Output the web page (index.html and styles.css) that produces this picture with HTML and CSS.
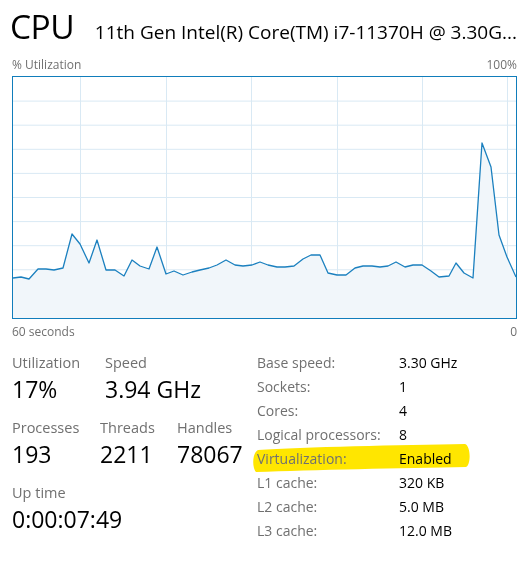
FILE: index.html
```html
<!DOCTYPE html>
<html lang="en">
<head>
<meta charset="utf-8">
<title>CPU</title>
<link rel="stylesheet" href="styles.css">
</head>
<body>
<div class="page">
  <header class="head">
    <h1 class="title">CPU</h1>
    <span class="model">11th Gen Intel(R) Core(TM) i7-11370H @ 3.30G...</span>
  </header>

  <div class="axis axis-top"><span>% Utilization</span><span>100%</span></div>

  <div class="chart">
    <svg class="graph" width="503" height="241" viewBox="0 0 503 241">
      <g class="grid">
        <line x1="0" y1="24.1" x2="503" y2="24.1"/>
        <line x1="0" y1="48.2" x2="503" y2="48.2"/>
        <line x1="0" y1="72.3" x2="503" y2="72.3"/>
        <line x1="0" y1="96.4" x2="503" y2="96.4"/>
        <line x1="0" y1="120.5" x2="503" y2="120.5"/>
        <line x1="0" y1="144.6" x2="503" y2="144.6"/>
        <line x1="0" y1="168.7" x2="503" y2="168.7"/>
        <line x1="0" y1="192.8" x2="503" y2="192.8"/>
        <line x1="0" y1="216.9" x2="503" y2="216.9"/>
        <line x1="67.5" y1="0" x2="67.5" y2="241"/>
        <line x1="153.5" y1="0" x2="153.5" y2="241"/>
        <line x1="238.5" y1="0" x2="238.5" y2="241"/>
        <line x1="324.5" y1="0" x2="324.5" y2="241"/>
        <line x1="409.5" y1="0" x2="409.5" y2="241"/>
        <line x1="494.5" y1="0" x2="494.5" y2="241"/>
      </g>
      <polygon class="area" points="0,201 8,200 16,202 25,192 33,192 41,193 50,191 59,157 67,167 76,186 84,163 93,193 102,193 111,199 119,183 127,189 136,192 144,170 153,197 161,194 170,198 179,195 187,193 196,191 204,188 213,183 222,188 230,189 239,188 247,185 255,188 264,190 272,190 281,189 290,182 298,178 307,178 315,196 324,198 333,198 342,191 350,189 359,189 367,190 375,189 383,185 392,190 400,188 409,188 418,194 426,200 436,199 443,186 451,196 460,201 469,66 478,90 486,158 494,180 503,200 503,241 0,241"/>
      <polyline class="line" points="0,201 8,200 16,202 25,192 33,192 41,193 50,191 59,157 67,167 76,186 84,163 93,193 102,193 111,199 119,183 127,189 136,192 144,170 153,197 161,194 170,198 179,195 187,193 196,191 204,188 213,183 222,188 230,189 239,188 247,185 255,188 264,190 272,190 281,189 290,182 298,178 307,178 315,196 324,198 333,198 342,191 350,189 359,189 367,190 375,189 383,185 392,190 400,188 409,188 418,194 426,200 436,199 443,186 451,196 460,201 469,66 478,90 486,158 494,180 503,200"/>
    </svg>
  </div>

  <div class="axis axis-bottom"><span>60 seconds</span><span>0</span></div>

  <div class="details">
    <div class="stats">
      <div class="stat-row">
        <div class="stat w-util"><div class="label">Utilization</div><div class="value">17%</div></div>
        <div class="stat"><div class="label">Speed</div><div class="value">3.94 GHz</div></div>
      </div>
      <div class="stat-row">
        <div class="stat w-proc"><div class="label">Processes</div><div class="value">193</div></div>
        <div class="stat w-thr"><div class="label">Threads</div><div class="value">2211</div></div>
        <div class="stat"><div class="label">Handles</div><div class="value">78067</div></div>
      </div>
      <div class="stat-row">
        <div class="stat"><div class="label">Up time</div><div class="value">0:00:07:49</div></div>
      </div>
    </div>

    <dl class="specs">
      <div class="spec"><dt>Base speed:</dt><dd>3.30 GHz</dd></div>
      <div class="spec"><dt>Sockets:</dt><dd>1</dd></div>
      <div class="spec"><dt>Cores:</dt><dd>4</dd></div>
      <div class="spec"><dt>Logical processors:</dt><dd>8</dd></div>
      <div class="spec spec-marked">
        <svg class="marker" width="220" height="28" viewBox="0 0 220 28"><path d="M6,6 C50,3 150,1 213,0 C219,2 219,21 214,23 C150,24 60,26 4,28 C0,24 0,9 6,6 Z"/></svg>
        <dt>Virtualization:</dt><dd>Enabled</dd>
      </div>
      <div class="spec"><dt>L1 cache:</dt><dd>320 KB</dd></div>
      <div class="spec"><dt>L2 cache:</dt><dd>5.0 MB</dd></div>
      <div class="spec"><dt>L3 cache:</dt><dd>12.0 MB</dd></div>
    </dl>
  </div>
</div>
</body>
</html>
```

FILE: styles.css
```css
* { box-sizing: border-box; }
html, body { margin: 0; padding: 0; background: #ffffff; }
body {
  font-family: "Open Sans", "Noto Sans", "Liberation Sans", sans-serif;
  color: #000;
  width: 526px;
  height: 566px;
  overflow: hidden;
}
.page { padding: 0 9px 0 12px; }

.head {
  display: flex;
  align-items: baseline;
  height: 54px;
  padding-top: 3px;
}
.title {
  margin: 0 0 0 -2px;
  font-size: 33.5px;
  font-weight: 400;
  line-height: 46px;
  letter-spacing: -0.5px;
  width: 85px;
}
.model {
  font-size: 19px;
  letter-spacing: 0;
  white-space: nowrap;
}

.axis {
  display: flex;
  justify-content: space-between;
  font-size: 12px;
  color: #707070;
  line-height: 16px;
}
.axis-top { height: 22px; padding-top: 3px; }
.axis-bottom { height: 24px; padding-top: 5px; }

.chart {
  width: 505px;
  height: 243px;
  border: 1px solid #117dbb;
  background: #fff;
}
.graph { display: block; }
.grid line { stroke: #d9e9f4; stroke-width: 1; }
.area { fill: #f1f6fa; }
.line { fill: none; stroke: #1b80bf; stroke-width: 1.3; stroke-linejoin: round; }

.details {
  display: flex;
  padding-top: 4px;
}
.stats {
  width: 245px;
  padding-top: 6px;
  display: flex;
  flex-direction: column;
}
.stat-row { display: flex; height: 65px; }
.stat { display: flex; flex-direction: column; }
.w-util { width: 93px; }
.w-proc { width: 88px; }
.w-thr { width: 77px; }
.label {
  font-size: 14.5px;
  color: #707070;
  line-height: 20px;
  white-space: nowrap;
}
.value {
  font-size: 23px;
  line-height: 33px;
  white-space: nowrap;
}

.specs {
  margin: 0;
  padding-top: 3px;
  display: flex;
  flex-direction: column;
}
.spec {
  display: flex;
  height: 24px;
  align-items: center;
  position: relative;
  font-size: 14px;
}
.spec dt { width: 142px; color: #707070; white-space: nowrap; }
.spec dd { margin: 0; color: #000; white-space: nowrap; }
.spec-marked dt, .spec-marked dd { position: relative; }
.marker {
  position: absolute;
  left: -5px;
  top: -2px;
  mix-blend-mode: multiply;
}
.marker path { fill: #ffe600; }
```
